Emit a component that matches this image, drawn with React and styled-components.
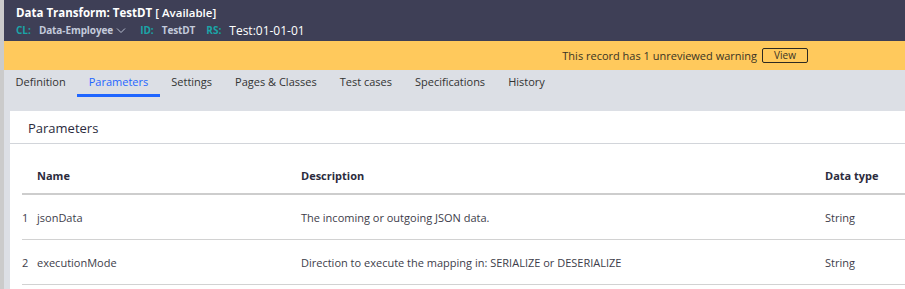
import React from 'react'
import styled, { createGlobalStyle } from 'styled-components'

const FONT = `"Open Sans", "Noto Sans", sans-serif`

const GlobalStyle = createGlobalStyle`
    html, body {
        margin: 0;
        padding: 0;
        background: #dcdfe5;
        font-family: ${FONT};
        overflow: hidden;
    }
`

const params = [
    { name: 'jsonData', description: 'The incoming or outgoing JSON data.', type: 'String' },
    { name: 'executionMode', description: 'Direction to execute the mapping in: SERIALIZE or DESERIALIZE', type: 'String' },
]

const tabs = ['Definition', 'Parameters', 'Settings', 'Pages & Classes', 'Test cases', 'Specifications', 'History']

const Chevron = () => (
    <svg width="10" height="7" viewBox="0 0 10 7" fill="none">
        <path d="M1 1.5 L5 5.5 L9 1.5" stroke="#b8bfd0" strokeWidth="1" />
    </svg>
)

const App = () => {
    return (
        <>
            <GlobalStyle />
            <Page>
                <LeftStrip />
                <Main>
                    <Header>
                        <Title>
                            Data Transform: TestDT<Status>[ Available]</Status>
                        </Title>
                        <MetaRow>
                            <MetaLabel>CL:</MetaLabel>
                            <MetaValue>Data-Employee</MetaValue>
                            <Chevron />
                            <MetaLabel $ml="14px">ID:</MetaLabel>
                            <MetaValue>TestDT</MetaValue>
                            <MetaLabel $ml="11px">RS:</MetaLabel>
                            <Ruleset>Test:01-01-01</Ruleset>
                        </MetaRow>
                    </Header>
                    <WarningBar>
                        <span>This record has 1 unreviewed warning</span>
                        <ViewButton>View</ViewButton>
                    </WarningBar>
                    <TabBar>
                        {tabs.map((t) => (
                            <Tab key={t} $active={t === 'Parameters'}>{t}</Tab>
                        ))}
                    </TabBar>
                    <Card>
                        <CardTitle>Parameters</CardTitle>
                        <Table>
                            <thead>
                                <tr>
                                    <Th $w="15px"></Th>
                                    <Th $w="264px">Name</Th>
                                    <Th $w="524px">Description</Th>
                                    <Th>Data type</Th>
                                </tr>
                            </thead>
                            <tbody>
                                {params.map((p, i) => (
                                    <tr key={p.name}>
                                        <Td>{i + 1}</Td>
                                        <Td>{p.name}</Td>
                                        <Td>{p.description}</Td>
                                        <Td>{p.type}</Td>
                                    </tr>
                                ))}
                            </tbody>
                        </Table>
                    </Card>
                </Main>
            </Page>
        </>
    )
}

export default App

const Page = styled.div`
    display: flex;
    width: 905px;
    height: 289px;
    overflow: hidden;
`

const LeftStrip = styled.div`
    width: 4px;
    flex-shrink: 0;
    background: #cbcbcb;
`

const Main = styled.div`
    flex: 1;
    display: flex;
    flex-direction: column;
    min-width: 0;
`

const Header = styled.div`
    background: #3e3f56;
    height: 41px;
    flex-shrink: 0;
    box-sizing: border-box;
    padding: 4px 0 0 12px;
`

const Title = styled.div`
    color: #ffffff;
    font-size: 11.5px;
    font-weight: 700;
    line-height: 17px;
    white-space: nowrap;
`

const Status = styled.span`
    font-size: 11.5px;
    font-weight: 600;
    margin-left: 3px;
`

const MetaRow = styled.div`
    display: flex;
    align-items: center;
    height: 16px;
    margin-top: 1px;
    svg {
        margin-left: 3px;
    }
`

const MetaLabel = styled.span`
    color: #1aa5a8;
    font-size: 10px;
    font-weight: 700;
    margin-left: ${(p) => p.$ml || '0'};
    margin-right: 8px;
`

const MetaValue = styled.span`
    color: #c3cadb;
    font-size: 10px;
    font-weight: 700;
    letter-spacing: -0.1px;
`

const Ruleset = styled.span`
    color: #ffffff;
    font-size: 12px;
`

const WarningBar = styled.div`
    background: #ffc95c;
    height: 29px;
    flex-shrink: 0;
    display: flex;
    align-items: center;
    justify-content: flex-end;
    padding-right: 97px;
    gap: 5px;
    font-size: 11px;
    color: #3a3424;
`

const ViewButton = styled.button`
    font-family: ${FONT};
    font-size: 10px;
    color: #3a3424;
    background: transparent;
    border: 1px solid #2d2a22;
    border-radius: 2px;
    width: 46px;
    height: 15px;
    padding: 0;
    line-height: 13px;
`

const TabBar = styled.div`
    display: flex;
    height: 41px;
    flex-shrink: 0;
    align-items: flex-start;
    padding-top: 4px;
    box-sizing: border-box;
`

const Tab = styled.div`
    padding: 0 11.5px;
    height: 23px;
    line-height: 16px;
    font-size: 11px;
    color: ${(p) => (p.$active ? '#1f66ff' : '#333333')};
    border-bottom: 3px solid ${(p) => (p.$active ? '#1f66ff' : 'transparent')};
    box-sizing: border-box;
    white-space: nowrap;
`

const Card = styled.div`
    flex: 1;
    background: #ffffff;
    margin-left: 6px;
`

const CardTitle = styled.div`
    height: 32px;
    line-height: 34px;
    padding-left: 18px;
    font-size: 13px;
    color: #2b2b3d;
    border-bottom: 1px solid #d2d5da;
`

const Table = styled.table`
    border-collapse: collapse;
    margin-left: 12px;
    width: calc(100% - 12px);
    table-layout: fixed;
`

const Th = styled.th`
    width: ${(p) => p.$w || 'auto'};
    height: 36px;
    padding: 13px 0 0;
    text-align: left;
    font-size: 11px;
    font-weight: 700;
    color: #2b2b3d;
    border-bottom: 2px solid #cdcdcd;
`

const Td = styled.td`
    height: 44px;
    padding: 0;
    font-size: 11px;
    color: #3d3d4a;
    border-bottom: 1px solid #d2d2d2;
    white-space: nowrap;
`
